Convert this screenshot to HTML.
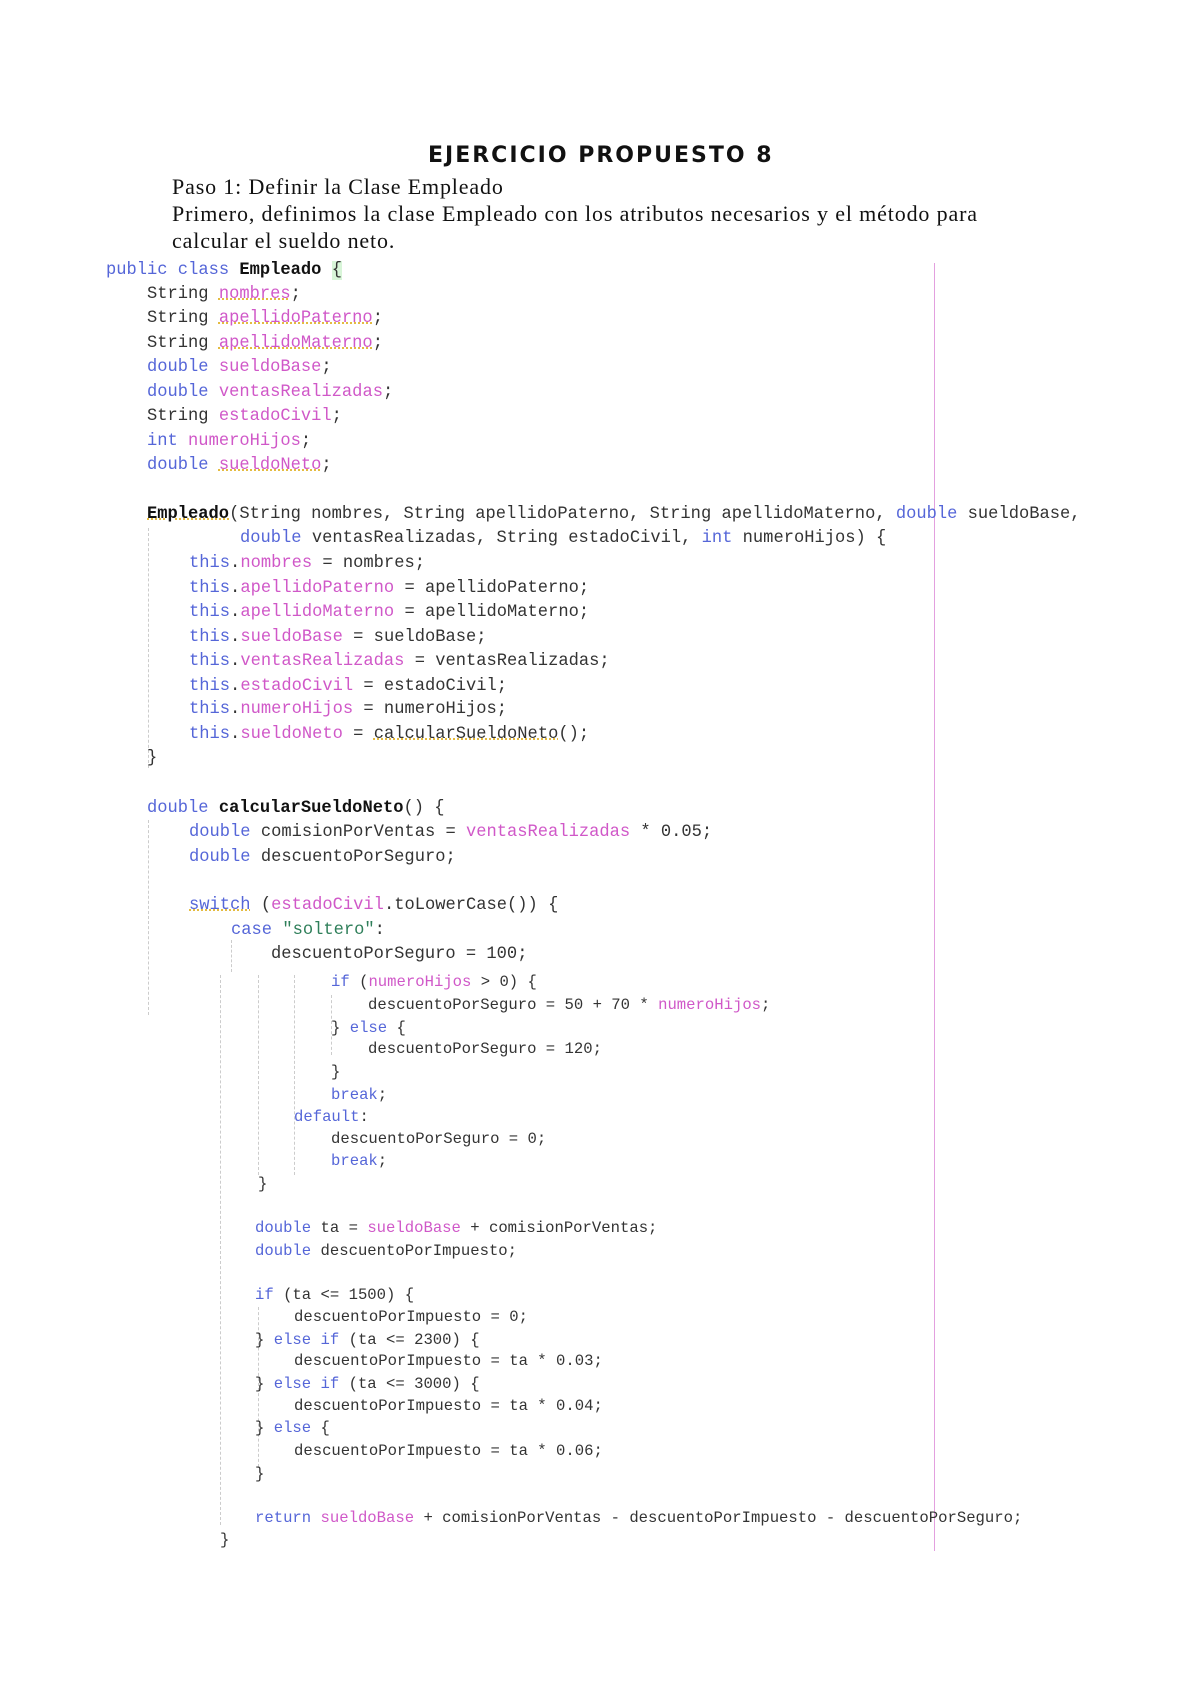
<!DOCTYPE html>
<html><head><meta charset="utf-8"><style>
html,body{margin:0;padding:0;background:#fff;}
body{width:1200px;height:1696px;position:relative;overflow:hidden;}
.t{position:absolute;left:428px;top:143px;font-family:"DejaVu Sans",sans-serif;font-weight:bold;font-size:22px;letter-spacing:2px;color:#111;white-space:nowrap;}
.p{position:absolute;left:172px;font-family:"Liberation Serif",serif;font-size:22px;letter-spacing:0.85px;color:#111;white-space:nowrap;}
.c{position:absolute;font-family:"Liberation Mono",monospace;font-size:17.1px;line-height:24px;color:#333;white-space:pre;}
.sm{font-size:15.6px;}
.k{color:#5566d8}.f{color:#d058c8}.s{color:#2f7f5a}.b{font-weight:bold;color:#111}
.u{text-decoration:underline dotted #e0b020;}
.g{position:absolute;width:0;border-left:1px dashed #ccc;}
.m{position:absolute;left:934px;top:263px;width:1px;height:1288px;background:#e3a0df;}
</style></head><body>
<div class="t">EJERCICIO PROPUESTO 8</div>
<div class="p" style="top:174px">Paso 1: Definir la Clase Empleado</div>
<div class="p" style="top:201px">Primero, definimos la clase Empleado con los atributos necesarios y el método para</div>
<div class="p" style="top:228px">calcular el sueldo neto.</div>
<div class="m"></div>
<div class="g" style="left:148px;top:528px;height:240px"></div>
<div class="g" style="left:148px;top:820px;height:195px"></div>
<div class="g" style="left:231px;top:940px;height:32px"></div>
<div class="g" style="left:220px;top:975px;height:550px"></div>
<div class="g" style="left:258px;top:975px;height:200px"></div>
<div class="g" style="left:294px;top:975px;height:200px"></div>
<div class="g" style="left:331px;top:995px;height:60px"></div>
<div class="g" style="left:258px;top:1307px;height:160px"></div>

<div class="c" style="left:106px;top:259px"><span class="k">public class</span> <span class="b">Empleado</span> <span style="background:#d8f5d8">{</span></div>
<div class="c" style="left:147px;top:283px">String <span class="f u">nombres</span>;</div>
<div class="c" style="left:147px;top:307px">String <span class="f u">apellidoPaterno</span>;</div>
<div class="c" style="left:147px;top:332px">String <span class="f u">apellidoMaterno</span>;</div>
<div class="c" style="left:147px;top:356px"><span class="k">double</span> <span class="f">sueldoBase</span>;</div>
<div class="c" style="left:147px;top:381px"><span class="k">double</span> <span class="f">ventasRealizadas</span>;</div>
<div class="c" style="left:147px;top:405px">String <span class="f">estadoCivil</span>;</div>
<div class="c" style="left:147px;top:430px"><span class="k">int</span> <span class="f">numeroHijos</span>;</div>
<div class="c" style="left:147px;top:454px"><span class="k">double</span> <span class="f u">sueldoNeto</span>;</div>

<div class="c" style="left:147px;top:503px"><span class="b u">Empleado</span>(String nombres, String apellidoPaterno, String apellidoMaterno, <span class="k">double</span> sueldoBase,</div>
<div class="c" style="left:240px;top:527px"><span class="k">double</span> ventasRealizadas, String estadoCivil, <span class="k">int</span> numeroHijos) {</div>
<div class="c" style="left:189px;top:552px"><span class="k">this</span>.<span class="f">nombres</span> = nombres;</div>
<div class="c" style="left:189px;top:577px"><span class="k">this</span>.<span class="f">apellidoPaterno</span> = apellidoPaterno;</div>
<div class="c" style="left:189px;top:601px"><span class="k">this</span>.<span class="f">apellidoMaterno</span> = apellidoMaterno;</div>
<div class="c" style="left:189px;top:626px"><span class="k">this</span>.<span class="f">sueldoBase</span> = sueldoBase;</div>
<div class="c" style="left:189px;top:650px"><span class="k">this</span>.<span class="f">ventasRealizadas</span> = ventasRealizadas;</div>
<div class="c" style="left:189px;top:675px"><span class="k">this</span>.<span class="f">estadoCivil</span> = estadoCivil;</div>
<div class="c" style="left:189px;top:698px"><span class="k">this</span>.<span class="f">numeroHijos</span> = numeroHijos;</div>
<div class="c" style="left:189px;top:723px"><span class="k">this</span>.<span class="f">sueldoNeto</span> = <span class="u">calcularSueldoNeto</span>();</div>
<div class="c" style="left:147px;top:747px">}</div>

<div class="c" style="left:147px;top:797px"><span class="k">double</span> <span class="b">calcularSueldoNeto</span>() {</div>
<div class="c" style="left:189px;top:821px"><span class="k">double</span> comisionPorVentas = <span class="f">ventasRealizadas</span> * 0.05;</div>
<div class="c" style="left:189px;top:846px"><span class="k">double</span> descuentoPorSeguro;</div>

<div class="c" style="left:189px;top:894px"><span class="k u">switch</span> (<span class="f">estadoCivil</span>.toLowerCase()) {</div>
<div class="c" style="left:231px;top:919px"><span class="k">case</span> <span class="s">"soltero"</span>:</div>
<div class="c" style="left:271px;top:943px">descuentoPorSeguro = 100;</div>
<div class="c sm" style="left:331px;top:970px"><span class="k">if</span> (<span class="f">numeroHijos</span> &gt; 0) {</div>
<div class="c sm" style="left:368px;top:993px">descuentoPorSeguro = 50 + 70 * <span class="f">numeroHijos</span>;</div>
<div class="c sm" style="left:331px;top:1016px">} <span class="k">else</span> {</div>
<div class="c sm" style="left:368px;top:1037px">descuentoPorSeguro = 120;</div>
<div class="c sm" style="left:331px;top:1060px">}</div>
<div class="c sm" style="left:331px;top:1083px"><span class="k">break</span>;</div>
<div class="c sm" style="left:294px;top:1105px"><span class="k">default</span>:</div>
<div class="c sm" style="left:331px;top:1127px">descuentoPorSeguro = 0;</div>
<div class="c sm" style="left:331px;top:1149px"><span class="k">break</span>;</div>
<div class="c sm" style="left:258px;top:1172px">}</div>

<div class="c sm" style="left:255px;top:1216px"><span class="k">double</span> ta = <span class="f">sueldoBase</span> + comisionPorVentas;</div>
<div class="c sm" style="left:255px;top:1239px"><span class="k">double</span> descuentoPorImpuesto;</div>

<div class="c sm" style="left:255px;top:1283px"><span class="k">if</span> (ta &lt;= 1500) {</div>
<div class="c sm" style="left:294px;top:1305px">descuentoPorImpuesto = 0;</div>
<div class="c sm" style="left:255px;top:1328px">} <span class="k">else if</span> (ta &lt;= 2300) {</div>
<div class="c sm" style="left:294px;top:1349px">descuentoPorImpuesto = ta * 0.03;</div>
<div class="c sm" style="left:255px;top:1372px">} <span class="k">else if</span> (ta &lt;= 3000) {</div>
<div class="c sm" style="left:294px;top:1394px">descuentoPorImpuesto = ta * 0.04;</div>
<div class="c sm" style="left:255px;top:1416px">} <span class="k">else</span> {</div>
<div class="c sm" style="left:294px;top:1439px">descuentoPorImpuesto = ta * 0.06;</div>
<div class="c sm" style="left:255px;top:1462px">}</div>

<div class="c sm" style="left:255px;top:1506px"><span class="k">return</span> <span class="f">sueldoBase</span> + comisionPorVentas - descuentoPorImpuesto - descuentoPorSeguro;</div>
<div class="c sm" style="left:220px;top:1528px">}</div>
</body></html>
